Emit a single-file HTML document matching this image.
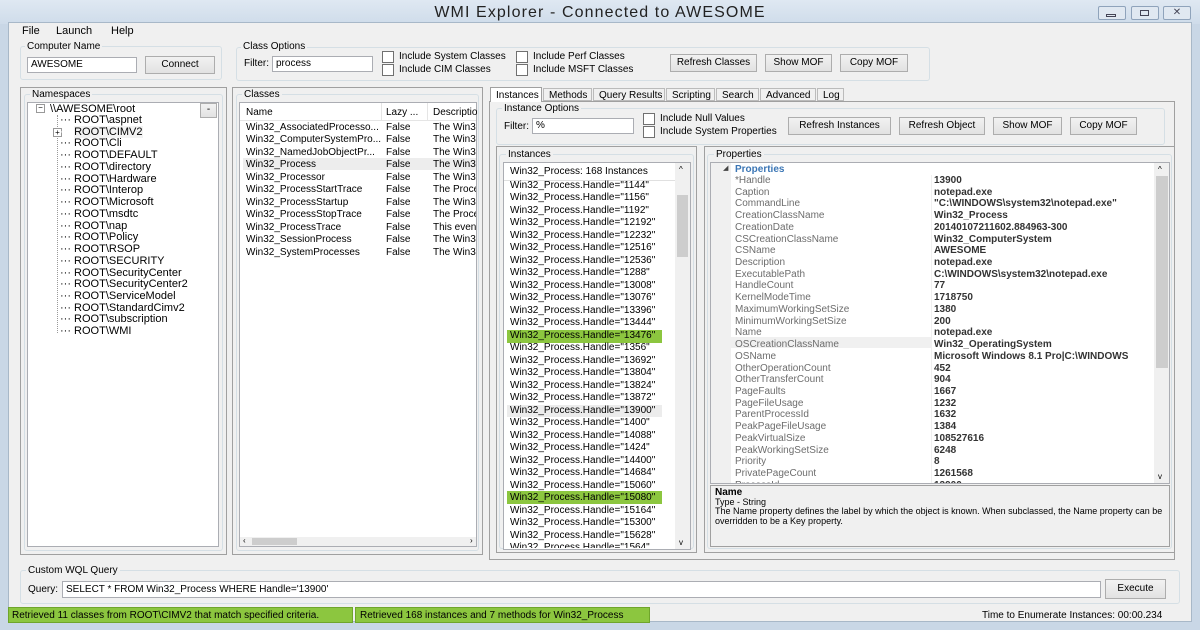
<!DOCTYPE html>
<html><head><meta charset="utf-8"><style>
*{box-sizing:border-box;margin:0;padding:0}
body{width:1200px;height:630px;overflow:hidden;background:#c9d7e6;font-family:"Liberation Sans",sans-serif;font-size:10px;color:#000;position:relative}
.a{position:absolute;white-space:nowrap}
.win{position:absolute;left:8px;top:22px;width:1184px;height:600px;background:#f0f0f0;border:1px solid #a8b8c8}
.grp{position:absolute;border:1px solid #d5dfe5;border-radius:3px}
.pan{position:absolute;border:1px solid #a0a0a0;background:#f0f0f0}
.wh{position:absolute;background:#fff;border:1px solid #abadb3}
.btn{position:absolute;background:linear-gradient(#f2f2f2,#e2e2e2);border:1px solid #adadad;text-align:center;line-height:15px;font-size:10px}
.cb{position:absolute;width:12px;height:12px;background:#fff;border:1px solid #707070}
.lbl{position:absolute;background:#f0f0f0;padding:0 2px;white-space:nowrap}
.sb{position:absolute;background:#f0f0f0}
.th{position:absolute;background:#cdcdcd}
</style></head><body>
<div class="a" style="left:0;top:0;width:1200px;height:24px;background:linear-gradient(#dfe8f2,#cfdcea)"></div>
<div class="a" style="left:0;top:4px;width:1200px;text-align:center;font-size:16px;letter-spacing:1.1px;color:#222">WMI Explorer - Connected to AWESOME</div>
<div class="a" style="left:1098px;top:6px;width:28px;height:14px;border:1px solid #8fa3bb;border-radius:2px;background:#e0e8f1"></div>
<div class="a" style="left:1131px;top:6px;width:28px;height:14px;border:1px solid #8fa3bb;border-radius:2px;background:#e0e8f1"></div>
<div class="a" style="left:1163px;top:6px;width:28px;height:14px;border:1px solid #8fa3bb;border-radius:2px;background:#e0e8f1;text-align:center;font-size:10px;line-height:12px;color:#445">✕</div>
<div class="a" style="left:1106px;top:14px;width:10px;height:3px;border:1px solid #445"></div>
<div class="a" style="left:1140px;top:10px;width:9px;height:6px;border:1px solid #445"></div>
<div class="win"></div>
<div class="a" style="left:22px;top:25px;font-size:11px">File</div>
<div class="a" style="left:56px;top:25px;font-size:11px">Launch</div>
<div class="a" style="left:111px;top:25px;font-size:11px">Help</div>

<div class="grp" style="left:20px;top:46px;width:202px;height:34px"></div>
<div class="lbl" style="left:25px;top:41px">Computer Name</div>
<div class="wh" style="left:27px;top:57px;width:110px;height:16px;padding:1px 3px">AWESOME</div>
<div class="btn" style="left:145px;top:56px;width:70px;height:18px">Connect</div>

<div class="grp" style="left:236px;top:47px;width:694px;height:34px"></div>
<div class="lbl" style="left:241px;top:41px">Class Options</div>
<div class="a" style="left:244px;top:58px">Filter:</div>
<div class="wh" style="left:272px;top:56px;width:101px;height:16px;padding:1px 3px">process</div>
<div class="cb" style="left:382px;top:51px"></div><div class="a" style="left:399px;top:51px">Include System Classes</div>
<div class="cb" style="left:382px;top:64px"></div><div class="a" style="left:399px;top:64px">Include CIM Classes</div>
<div class="cb" style="left:516px;top:51px"></div><div class="a" style="left:533px;top:51px">Include Perf Classes</div>
<div class="cb" style="left:516px;top:64px"></div><div class="a" style="left:533px;top:64px">Include MSFT Classes</div>
<div class="btn" style="left:670px;top:54px;width:87px;height:18px">Refresh Classes</div>
<div class="btn" style="left:765px;top:54px;width:67px;height:18px">Show MOF</div>
<div class="btn" style="left:840px;top:54px;width:68px;height:18px">Copy MOF</div>

<!-- Namespaces -->
<div class="pan" style="left:20px;top:87px;width:207px;height:468px"></div>
<div class="grp" style="left:24px;top:94px;width:199px;height:457px"></div>
<div class="lbl" style="left:30px;top:89px">Namespaces</div>
<div class="wh" style="left:27px;top:102px;width:192px;height:445px"></div>
<div class="btn" style="left:200px;top:103px;width:17px;height:15px;line-height:12px">-</div>
<div class="a" style="left:36px;top:104px;width:9px;height:9px;border:1px solid #999;font-size:8px;line-height:6px;text-align:center;background:#fff">−</div>
<div class="a" style="left:50px;top:103px;font-size:11px">\\AWESOME\root</div>
<div class="a" style="left:57px;top:115px;height:218px;border-left:1px dotted #999"></div>
<div class="a" style="left:53px;top:128px;width:9px;height:9px;border:1px solid #999;font-size:8px;line-height:7px;text-align:center;background:#fff">+</div>
<div class="a" style="left:60px;top:115px;font-size:11px;line-height:11.74px;color:#000">
<div>··· ROOT\aspnet</div><div><span style="color:#fff">···</span> <span style="background:#f2f2f2">ROOT\CIMV2</span></div><div>··· ROOT\Cli</div><div>··· ROOT\DEFAULT</div><div>··· ROOT\directory</div><div>··· ROOT\Hardware</div><div>··· ROOT\Interop</div><div>··· ROOT\Microsoft</div><div>··· ROOT\msdtc</div><div>··· ROOT\nap</div><div>··· ROOT\Policy</div><div>··· ROOT\RSOP</div><div>··· ROOT\SECURITY</div><div>··· ROOT\SecurityCenter</div><div>··· ROOT\SecurityCenter2</div><div>··· ROOT\ServiceModel</div><div>··· ROOT\StandardCimv2</div><div>··· ROOT\subscription</div><div>··· ROOT\WMI</div></div>

<!-- Classes -->
<div class="pan" style="left:232px;top:87px;width:251px;height:468px"></div>
<div class="grp" style="left:236px;top:94px;width:243px;height:457px"></div>
<div class="lbl" style="left:242px;top:89px">Classes</div>
<div class="wh" style="left:239px;top:102px;width:238px;height:445px"></div>
<div class="a" style="left:240px;top:103px;width:236px;height:18px;background:#fff;border-bottom:1px solid #e5e5e5"></div>
<div class="a" style="left:381px;top:103px;height:18px;border-left:1px solid #e5e5e5"></div>
<div class="a" style="left:427px;top:103px;height:18px;border-left:1px solid #e5e5e5"></div>
<div class="a" style="left:246px;top:107px">Name</div><div class="a" style="left:386px;top:107px">Lazy ...</div><div class="a" style="left:433px;top:107px">Descriptio</div>
<div class="a" style="left:243px;top:158px;width:233px;height:12px;background:#ededed"></div>
<div class="a" style="left:246px;top:122px;line-height:12.45px;width:230px;overflow:hidden">
<div>Win32_AssociatedProcesso...</div><div>Win32_ComputerSystemPro...</div><div>Win32_NamedJobObjectPr...</div><div>Win32_Process</div><div>Win32_Processor</div><div>Win32_ProcessStartTrace</div><div>Win32_ProcessStartup</div><div>Win32_ProcessStopTrace</div><div>Win32_ProcessTrace</div><div>Win32_SessionProcess</div><div>Win32_SystemProcesses</div></div>
<div class="a" style="left:386px;top:122px;line-height:12.45px"><div>False</div><div>False</div><div>False</div><div>False</div><div>False</div><div>False</div><div>False</div><div>False</div><div>False</div><div>False</div><div>False</div></div>
<div class="a" style="left:433px;top:122px;line-height:12.45px;width:43px;overflow:hidden"><div>The Win3</div><div>The Win3</div><div>The Win3</div><div>The Win3</div><div>The Win3</div><div>The Proce</div><div>The Win3</div><div>The Proce</div><div>This even</div><div>The Win3</div><div>The Win3</div></div>
<div class="sb" style="left:240px;top:537px;width:236px;height:9px"></div>
<div class="th" style="left:252px;top:538px;width:45px;height:7px"></div>
<div class="a" style="left:243px;top:536px;font-size:8px">‹</div><div class="a" style="left:470px;top:536px;font-size:8px">›</div>

<!-- Tabs -->
<div class="a" style="left:489px;top:101px;width:686px;height:459px;border:1px solid #a0a0a0;background:#f0f0f0"></div>
<div class="a" style="left:490px;top:87px;width:52px;height:15px;background:#fff;border:1px solid #a0a0a0;border-bottom:none;padding:2px 0 0 5px">Instances</div>
<div class="a" style="left:543px;top:88px;width:49px;height:13px;border:1px solid #bbb;padding:1px 0 0 5px;background:#f0f0f0">Methods</div>
<div class="a" style="left:593px;top:88px;width:72px;height:13px;border:1px solid #bbb;padding:1px 0 0 5px;background:#f0f0f0">Query Results</div>
<div class="a" style="left:666px;top:88px;width:49px;height:13px;border:1px solid #bbb;padding:1px 0 0 5px;background:#f0f0f0">Scripting</div>
<div class="a" style="left:716px;top:88px;width:43px;height:13px;border:1px solid #bbb;padding:1px 0 0 5px;background:#f0f0f0">Search</div>
<div class="a" style="left:760px;top:88px;width:56px;height:13px;border:1px solid #bbb;padding:1px 0 0 5px;background:#f0f0f0">Advanced</div>
<div class="a" style="left:817px;top:88px;width:27px;height:13px;border:1px solid #bbb;padding:1px 0 0 5px;background:#f0f0f0">Log</div>

<div class="grp" style="left:496px;top:108px;width:669px;height:37px"></div>
<div class="lbl" style="left:502px;top:103px">Instance Options</div>
<div class="a" style="left:504px;top:121px">Filter:</div>
<div class="wh" style="left:532px;top:118px;width:102px;height:16px;padding:1px 3px">%</div>
<div class="cb" style="left:643px;top:113px"></div><div class="a" style="left:660px;top:113px">Include Null Values</div>
<div class="cb" style="left:643px;top:126px"></div><div class="a" style="left:660px;top:126px">Include System Properties</div>
<div class="btn" style="left:788px;top:117px;width:103px;height:18px">Refresh Instances</div>
<div class="btn" style="left:899px;top:117px;width:86px;height:18px">Refresh Object</div>
<div class="btn" style="left:993px;top:117px;width:69px;height:18px">Show MOF</div>
<div class="btn" style="left:1070px;top:117px;width:67px;height:18px">Copy MOF</div>

<!-- Instances -->
<div class="pan" style="left:496px;top:146px;width:201px;height:407px"></div>
<div class="grp" style="left:499px;top:154px;width:195px;height:395px"></div>
<div class="lbl" style="left:506px;top:149px">Instances</div>
<div class="wh" style="left:503px;top:162px;width:188px;height:388px"></div>
<div class="a" style="left:510px;top:166px">Win32_Process: 168 Instances</div>
<div class="a" style="left:504px;top:180px;width:171px;border-top:1px solid #e0e0e0"></div>
<div class="a" style="left:507px;top:330px;width:155px;height:13px;background:#8cc63f"></div>
<div class="a" style="left:507px;top:405px;width:155px;height:12px;background:#ececec"></div>
<div class="a" style="left:507px;top:491px;width:155px;height:13px;background:#8cc63f"></div>
<div class="a" style="left:510px;top:180px;line-height:12.48px;height:368px;overflow:hidden">
<div>Win32_Process.Handle="1144"</div><div>Win32_Process.Handle="1156"</div><div>Win32_Process.Handle="1192"</div><div>Win32_Process.Handle="12192"</div><div>Win32_Process.Handle="12232"</div><div>Win32_Process.Handle="12516"</div><div>Win32_Process.Handle="12536"</div><div>Win32_Process.Handle="1288"</div><div>Win32_Process.Handle="13008"</div><div>Win32_Process.Handle="13076"</div><div>Win32_Process.Handle="13396"</div><div>Win32_Process.Handle="13444"</div><div>Win32_Process.Handle="13476"</div><div>Win32_Process.Handle="1356"</div><div>Win32_Process.Handle="13692"</div><div>Win32_Process.Handle="13804"</div><div>Win32_Process.Handle="13824"</div><div>Win32_Process.Handle="13872"</div><div>Win32_Process.Handle="13900"</div><div>Win32_Process.Handle="1400"</div><div>Win32_Process.Handle="14088"</div><div>Win32_Process.Handle="1424"</div><div>Win32_Process.Handle="14400"</div><div>Win32_Process.Handle="14684"</div><div>Win32_Process.Handle="15060"</div><div>Win32_Process.Handle="15080"</div><div>Win32_Process.Handle="15164"</div><div>Win32_Process.Handle="15300"</div><div>Win32_Process.Handle="15628"</div><div>Win32_Process.Handle="1564"</div></div>
<div class="sb" style="left:675px;top:163px;width:15px;height:386px"></div>
<div class="th" style="left:677px;top:195px;width:11px;height:62px"></div>
<div class="a" style="left:679px;top:165px;font-size:8px">^</div><div class="a" style="left:679px;top:538px;font-size:8px">v</div>

<!-- Properties -->
<div class="pan" style="left:704px;top:146px;width:471px;height:407px"></div>
<div class="grp" style="left:707px;top:154px;width:465px;height:395px"></div>
<div class="lbl" style="left:714px;top:149px">Properties</div>
<div class="wh" style="left:710px;top:162px;width:460px;height:322px;overflow:hidden">
<div class="a" style="left:0;top:0;width:20px;height:322px;background:#f0f0f0"></div>
<div class="a" style="left:20px;top:174px;width:200px;height:11px;background:#f0f0f0"></div>
<div class="a" style="left:220px;top:12px;height:310px;border-left:1px solid #f0f0f0"></div>
<div class="a" style="left:12px;top:1px;font-size:7px;color:#444">◢</div>
<div class="a" style="left:24px;top:1px;font-weight:bold;color:#3b76b5">Properties</div>
<div class="a" style="left:24px;top:12px;line-height:11.72px;color:#6d6d6d"><div>*Handle</div><div>Caption</div><div>CommandLine</div><div>CreationClassName</div><div>CreationDate</div><div>CSCreationClassName</div><div>CSName</div><div>Description</div><div>ExecutablePath</div><div>HandleCount</div><div>KernelModeTime</div><div>MaximumWorkingSetSize</div><div>MinimumWorkingSetSize</div><div>Name</div><div>OSCreationClassName</div><div>OSName</div><div>OtherOperationCount</div><div>OtherTransferCount</div><div>PageFaults</div><div>PageFileUsage</div><div>ParentProcessId</div><div>PeakPageFileUsage</div><div>PeakVirtualSize</div><div>PeakWorkingSetSize</div><div>Priority</div><div>PrivatePageCount</div><div>ProcessId</div></div>
<div class="a" style="left:223px;top:12px;line-height:11.72px;color:#333;font-weight:bold;width:220px;overflow:hidden"><div>13900</div><div>notepad.exe</div><div>"C:\WINDOWS\system32\notepad.exe"</div><div>Win32_Process</div><div>20140107211602.884963-300</div><div>Win32_ComputerSystem</div><div>AWESOME</div><div>notepad.exe</div><div>C:\WINDOWS\system32\notepad.exe</div><div>77</div><div>1718750</div><div>1380</div><div>200</div><div>notepad.exe</div><div>Win32_OperatingSystem</div><div>Microsoft Windows 8.1 Pro|C:\WINDOWS</div><div>452</div><div>904</div><div>1667</div><div>1232</div><div>1632</div><div>1384</div><div>108527616</div><div>6248</div><div>8</div><div>1261568</div><div>13900</div></div>
<div class="sb" style="left:443px;top:0;width:16px;height:321px"></div>
<div class="th" style="left:445px;top:13px;width:12px;height:192px"></div>
<div class="a" style="left:447px;top:2px;font-size:8px">^</div><div class="a" style="left:447px;top:309px;font-size:8px">v</div>
</div>
<div class="a" style="left:710px;top:485px;width:460px;height:62px;border:1px solid #a0a0a0;background:#f0f0f0;padding:2px 4px;white-space:normal;line-height:9.5px;font-size:9px">
<b style="font-size:10px">Name</b><br>Type - String<br>The Name property defines the label by which the object is known. When subclassed, the Name property can be overridden to be a Key property.</div>

<!-- WQL -->
<div class="grp" style="left:20px;top:570px;width:1160px;height:34px"></div>
<div class="lbl" style="left:26px;top:565px">Custom WQL Query</div>
<div class="a" style="left:28px;top:584px">Query:</div>
<div class="wh" style="left:62px;top:581px;width:1039px;height:17px;padding:2px 3px">SELECT * FROM Win32_Process WHERE Handle='13900'</div>
<div class="btn" style="left:1105px;top:579px;width:61px;height:20px;line-height:18px">Execute</div>

<!-- status -->
<div class="a" style="left:8px;top:607px;width:345px;height:16px;background:#8cc63f;border:1px solid #6fa52b;padding:2px 3px">Retrieved 11 classes from ROOT\CIMV2 that match specified criteria.</div>
<div class="a" style="left:355px;top:607px;width:295px;height:16px;background:#8cc63f;border:1px solid #6fa52b;padding:2px 4px">Retrieved 168 instances and 7 methods for Win32_Process</div>
<div class="a" style="left:982px;top:610px">Time to Enumerate Instances: 00:00.234</div>
</body></html>
